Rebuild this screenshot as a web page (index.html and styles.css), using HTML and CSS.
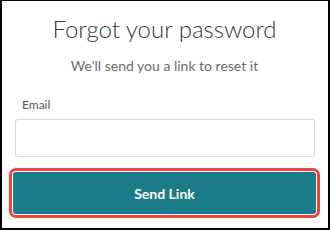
FILE: index.html
```html
<!DOCTYPE html>
<html>
<head>
<meta charset="utf-8">
<link rel="stylesheet" href="styles.css">
</head>
<body>
<div class="frame">
  <h1 class="title">Forgot your password</h1>
  <p class="subtitle">We'll send you a link to reset it</p>
  <label class="label" for="email">Email</label>
  <input class="input" id="email" type="text">
  <div class="focus-ring">
    <button class="btn" type="button">Send Link</button>
  </div>
</div>
</body>
</html>
```
FILE: styles.css
```css
html, body {
  margin: 0;
  padding: 0;
  background: #fff;
}
.frame {
  box-sizing: border-box;
  width: 330px;
  height: 230px;
  border: 2px solid #000;
  border-top-width: 1px;
  font-family: Lato, "Liberation Sans", sans-serif;
  display: flex;
  flex-direction: column;
  padding: 0 8px 0 7px;
}
.title {
  margin: 13px 0 0;
  font-weight: 300;
  font-size: 24px;
  line-height: 30px;
  color: #333a40;
  text-align: center;
}
.subtitle {
  margin: 12px 0 0;
  font-size: 14px;
  line-height: 20px;
  color: #6c6c70;
  text-align: center;
}
.label {
  margin: 22px 0 0 13px;
  font-size: 12px;
  line-height: 14px;
  color: #555;
}
.input {
  box-sizing: border-box;
  margin: 7px 5px 0 6px;
  height: 38px;
  border: 1px solid #d8d8d8;
  border-radius: 3px;
  outline: none;
}
.focus-ring {
  margin-top: 11px;
  border: 3px solid #f04040;
  border-radius: 7px;
  padding: 1px;
}
.btn {
  display: block;
  width: 100%;
  height: 42px;
  border: 0;
  border-radius: 3px;
  background: #1b7b88;
  color: #fff;
  font-family: Lato, "Liberation Sans", sans-serif;
  font-weight: 700;
  font-size: 14px;
  cursor: pointer;
}
```
